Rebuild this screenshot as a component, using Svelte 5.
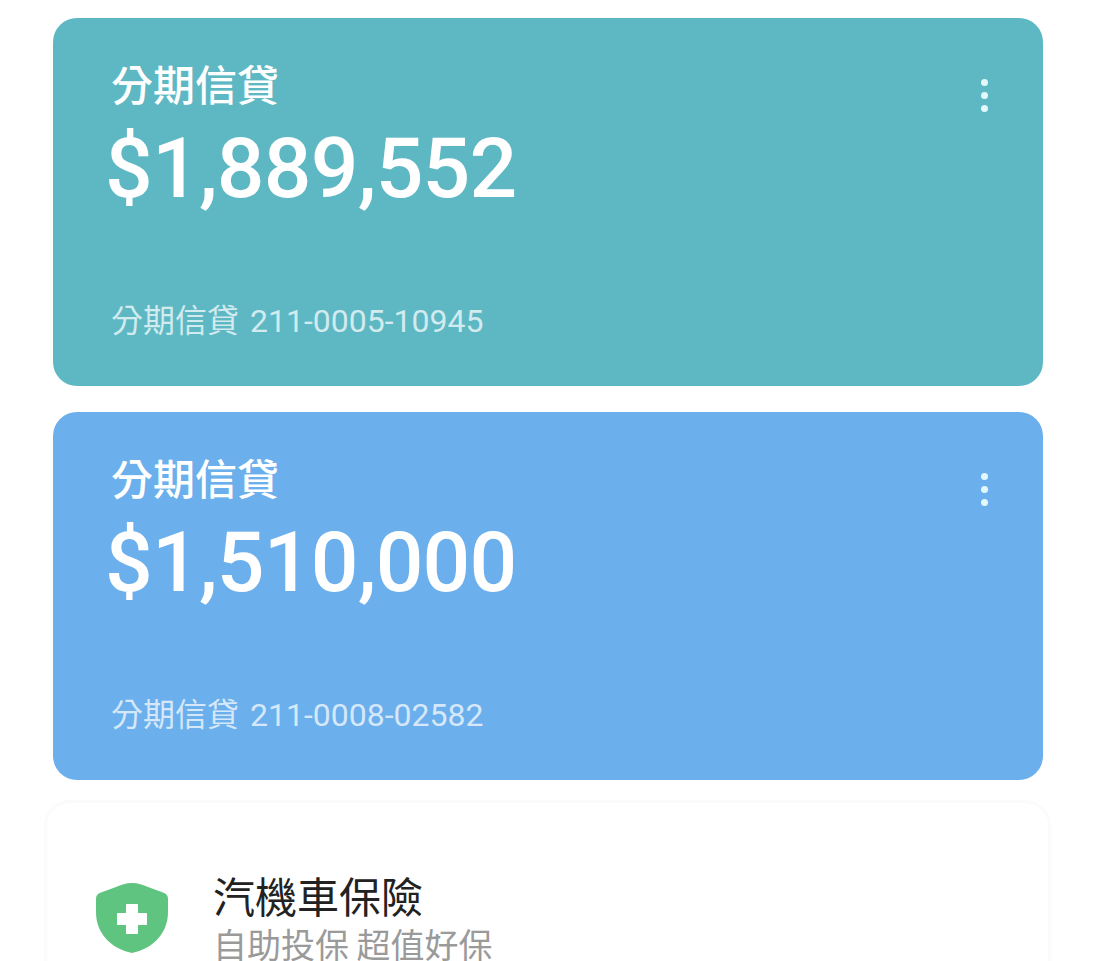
<script>
  const loans = [
    { title: "分期信貸", amount: "$1,889,552", account: "211-0005-10945", tone: "teal" },
    { title: "分期信貸", amount: "$1,510,000", account: "211-0008-02582", tone: "blue" }
  ];
</script>

<div class="page">
  {#each loans as loan}
    <section class="card {loan.tone}">
      <div class="top">
        <div>
          <div class="title">{loan.title}</div>
          <div class="amount">{loan.amount}</div>
        </div>
        <div class="more"><i></i><i></i><i></i></div>
      </div>
      <div class="account"><span class="cjk">分期信貸</span><span class="number">{loan.account}</span></div>
    </section>
  {/each}

  <section class="insure">
    <svg class="shield" viewBox="0 0 72 70" width="72" height="70">
      <path d="M36 0C42 0 47 2 52 4L67 9.500C70.500 10.800 72 12.500 72 16V29C72 51 56 66 36 70C16 66 0 51 0 29V16C0 12.500 1.500 10.800 5 9.500L20 4C25 2 30 0 36 0Z" fill="#5fc47f" />
      <path d="M31 21H41C41.600 21 42 21.400 42 22V30H50C50.600 30 51 30.400 51 31V41C51 41.600 50.600 42 50 42H42V50C42 50.600 41.600 51 41 51H31C30.400 51 30 50.600 30 50V42H22C21.400 42 21 41.600 21 41V31C21 30.400 21.400 30 22 30H30V22C30 21.400 30.400 21 31 21Z" fill="#fff" />
    </svg>
    <div>
      <div class="name">汽機車保險</div>
      <div class="desc">自助投保 超值好保</div>
    </div>
  </section>
</div>

<style>
  :global(body) {
    margin: 0;
    background: #fff;
  }

  .page {
    width: 1096px;
    height: 961px;
    overflow: hidden;
    box-sizing: border-box;
    padding: 18px 45px 0 44px;
    font-family: "Noto Sans CJK TC", sans-serif;
  }

  .card {
    height: 368px;
    margin: 0 8px 26px 9px;
    padding: 39px 55px 0 58px;
    box-sizing: border-box;
    border-radius: 24px;
    color: #fff;
    display: flex;
    flex-direction: column;
  }
  .teal { background: #5eb8c4; }
  .blue { background: #6bafec; }

  .top {
    display: flex;
    justify-content: space-between;
    height: 238px;
  }

  .title {
    font-size: 42px;
    font-weight: 500;
    line-height: 52px;
  }

  .amount {
    font-family: Roboto, sans-serif;
    font-size: 84px;
    font-weight: 500;
    line-height: 98px;
    margin: 11px 0 0 -6px;
    letter-spacing: -0.8px;
  }

  .more {
    display: flex;
    flex-direction: column;
    gap: 6px;
    padding-top: 22px;
  }
  .more i {
    width: 7px;
    height: 7px;
    border-radius: 50%;
    background: #e2f8fb;
  }

  .account {
    font-size: 32px;
    line-height: 46px;
    color: rgba(255, 255, 255, 0.72);
    white-space: nowrap;
  }
  .number {
    font-family: Roboto, sans-serif;
    margin-left: 11px;
  }

  .insure {
    margin-top: -6px;
    height: 300px;
    border: 3px solid #fbfbfb;
    border-radius: 26px;
    box-sizing: border-box;
    padding: 64px 0 0 49px;
    display: flex;
    align-items: flex-start;
    gap: 45px;
  }

  .shield {
    margin-top: 16px;
    flex-shrink: 0;
  }

  .name {
    font-size: 42px;
    line-height: 52px;
    margin-top: 2px;
    color: #222;
  }

  .desc {
    font-size: 34px;
    line-height: 46px;
    color: #9a9a9a;
  }
</style>
